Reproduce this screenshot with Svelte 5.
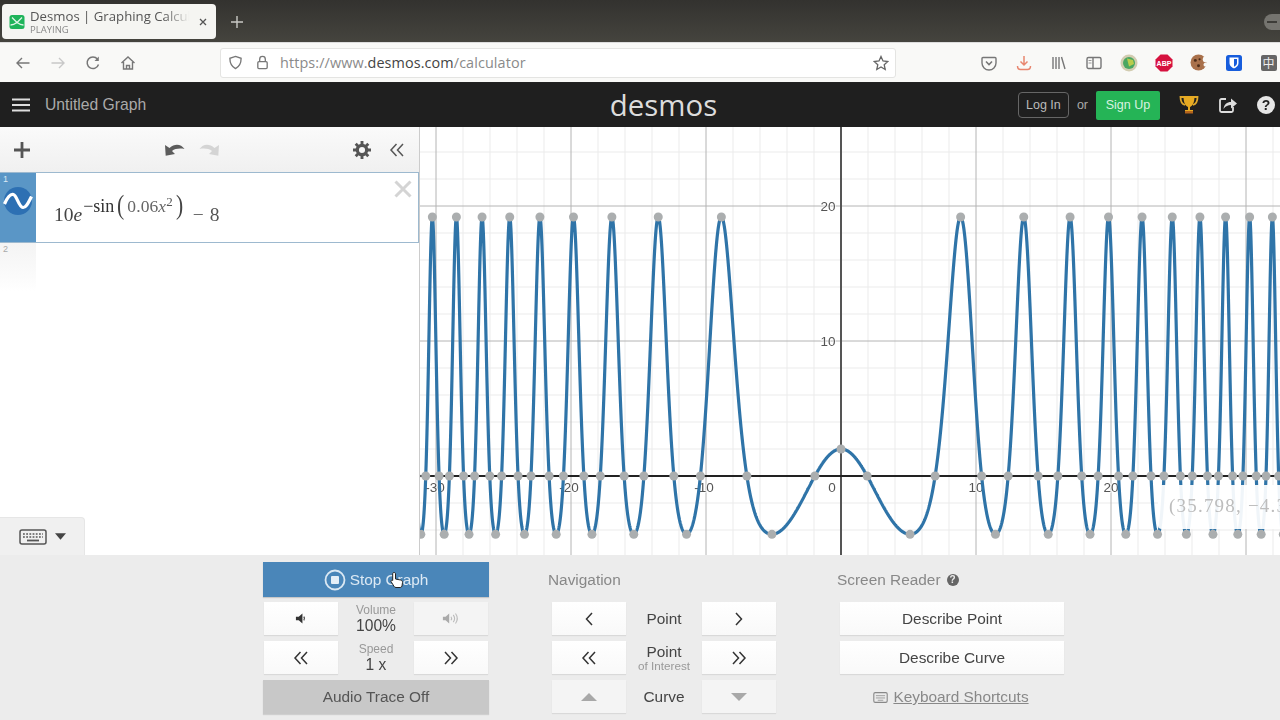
<script>
  const X0 = 421, Y0 = 349, S = 13.5;
  const px = (x) => X0 + x * S;
  const py = (y) => Y0 - y * S;
  const f = (x) => 10 * Math.exp(-Math.sin(0.06 * x * x)) - 8;

  const W = 860, H = 428;
  let d = '';
  for (let x = -32; x <= 33; x += 0.01) {
    d += (d ? 'L' : 'M') + px(x).toFixed(2) + ' ' + py(f(x)).toFixed(2);
  }

  const dots = [{ x: 0, y: 2 }];
  const addU = (u, y) => {
    const x = Math.sqrt(u / 0.06);
    for (const sx of [x, -x]) if (px(sx) > -8 && px(sx) < W + 8) dots.push({ x: sx, y });
  };
  const s0 = Math.asin(Math.log(10 / 8));
  for (let k = 0; k < 12; k++) {
    addU(Math.PI * 1.5 + 2 * Math.PI * k, 10 * Math.E - 8);
    addU(Math.PI * 0.5 + 2 * Math.PI * k, 10 / Math.E - 8);
    addU(s0 + 2 * Math.PI * k, 0);
    addU(Math.PI - s0 + 2 * Math.PI * k, 0);
  }

  const minorX = [], majorX = [], minorY = [], majorY = [];
  for (let i = -16; i <= 17; i++) {
    (i % 5 === 0 ? majorX : minorX).push(px(i * 2));
  }
  for (let i = -2; i <= 12; i++) {
    (i % 5 === 0 ? majorY : minorY).push(py(i * 2));
  }

  const xLabels = [
    { t: '-30', x: 15, y: 365 }, { t: '-20', x: 149, y: 365 }, { t: '-10', x: 284, y: 365 },
    { t: '0', x: 412, y: 365 }, { t: '10', x: 556, y: 365 }, { t: '20', x: 691, y: 365 }
  ];
  const yLabels = [{ t: '20', y: 84 }, { t: '10', y: 219 }];
</script>

<div class="app">
  <div class="titlebar">
    <div class="tab">
      <svg class="favicon" viewBox="0 0 16 16" width="16" height="16">
        <rect x="0.5" y="1" width="15" height="14" rx="2.5" fill="#1fb45a" />
        <path d="M3 3.500 8 8.500 13 3.500M1.500 11C4.500 11 6 10 8 8.500 10 10 11.500 11 14.500 11" fill="none" stroke="#dff5e6" stroke-width="1.300" />
      </svg>
      <div class="tabtext">
        <div class="tabtitle">Desmos | Graphing Calcul</div>
        <div class="playing">PLAYING</div>
      </div>
      <svg class="tabx" viewBox="0 0 10 10" width="10" height="10"><path d="M2 2 8 8M8 2 2 8" stroke="#555" stroke-width="1.300" /></svg>
    </div>
    <svg class="newtab" viewBox="0 0 12 12" width="12" height="12"><path d="M6 0V12M0 6H12" stroke="#c9c9c5" stroke-width="1.400" /></svg>
    <div class="winspacer"></div>
    <div class="winbtn"><span></span></div>
  </div>

  <div class="toolbar">
    <div class="slots">
      <div class="slot"><svg viewBox="0 0 16 16" width="16" height="16"><path d="M14.500 8H2M7 3 2 8l5 5" fill="none" stroke="#777" stroke-width="1.400" /></svg></div>
      <div class="slot"><svg viewBox="0 0 16 16" width="16" height="16"><path d="M1.500 8H14M9 3l5 5-5 5" fill="none" stroke="#c8c8c8" stroke-width="1.400" /></svg></div>
      <div class="slot"><svg viewBox="0 0 16 16" width="16" height="16"><path d="M13.500 9.500A5.800 5.800 0 1 1 12.400 4" fill="none" stroke="#777" stroke-width="1.500" /><path d="M13.800 1.500V6H9.500z" fill="#777" /></svg></div>
      <div class="slot"><svg viewBox="0 0 16 16" width="16" height="16"><path d="M1.500 8 8 2l6.500 6M3.500 7v7h9V7M6.500 14v-3.500h3V14" fill="none" stroke="#777" stroke-width="1.400" /></svg></div>
    </div>
    <div class="urlbar">
      <svg class="shield" viewBox="0 0 16 16" width="15" height="15"><path d="M8 1.500 14 3.500C14 9 12 12.500 8 14.500 4 12.500 2 9 2 3.500z" fill="none" stroke="#777" stroke-width="1.400" /></svg>
      <svg class="lock" viewBox="0 0 16 16" width="15" height="15"><path d="M5 7V4.500a3 3 0 0 1 6 0V7" fill="none" stroke="#777" stroke-width="1.400" /><rect x="3" y="7" width="10" height="7.500" rx="1.200" fill="none" stroke="#777" stroke-width="1.400" /></svg>
      <div class="url">https://www.<b>desmos.com</b>/calculator</div>
      <svg class="star" viewBox="0 0 16 16" width="16" height="16"><path d="M8 1.500 10 6l4.800.5-3.600 3.200 1 4.800L8 12l-4.200 2.500 1-4.800L1.200 6.500 6 6z" fill="none" stroke="#666" stroke-width="1.300" /></svg>
    </div>
    <div class="winspacer"></div>
    <div class="slots right">
      <div class="slot"><svg viewBox="0 0 16 16" width="16" height="16"><path d="M2 2.500h12a1 1 0 0 1 1 1V8a7 7 0 0 1-14 0V3.500a1 1 0 0 1 1-1z" fill="none" stroke="#777" stroke-width="1.400" /><path d="M5 6.500 8 9.500l3-3" fill="none" stroke="#777" stroke-width="1.600" /></svg></div>
      <div class="slot"><svg viewBox="0 0 16 16" width="16" height="16"><path d="M8 1v9M4.500 6.500 8 10l3.500-3.500M1.500 11c0 2 1 3.500 3 3.500h7c2 0 3-1.500 3-3.500" fill="none" stroke="#e8866f" stroke-width="1.500" /></svg></div>
      <div class="slot"><svg viewBox="0 0 16 16" width="16" height="16"><path d="M2 2v12M5 2v12M8 2v12M10.500 2l3.500 12" fill="none" stroke="#777" stroke-width="1.400" /></svg></div>
      <div class="slot"><svg viewBox="0 0 16 16" width="16" height="16"><rect x="1" y="2.500" width="14" height="11" rx="1.500" fill="none" stroke="#777" stroke-width="1.400" /><path d="M7 3v10" stroke="#777" stroke-width="1.400" /><path d="M2.500 5.500H5.500M2.500 8H5.500" stroke="#999" stroke-width="1" /></svg></div>
      <div class="slot"><svg viewBox="0 0 18 18" width="18" height="18"><circle cx="9" cy="9" r="8.500" fill="#d2ccb0" /><circle cx="9" cy="9" r="6" fill="#4aa660" /><path d="M7 4.500 13 6 14 10 9 12.500z" fill="#b9cc4c" /></svg></div>
      <div class="slot"><svg viewBox="0 0 18 18" width="18" height="18"><path d="M5.500 .5h7l5 5v7l-5 5h-7l-5-5v-7z" fill="#d6123f" /><text x="9" y="11.500" class="abp">ABP</text></svg></div>
      <div class="slot"><svg viewBox="0 0 16 16" width="17" height="17"><circle cx="8" cy="8" r="7.500" fill="#a9714b" /><circle cx="5" cy="6" r="1.400" fill="#4c2c18" /><circle cx="8" cy="11" r="1.400" fill="#4c2c18" /><circle cx="9" cy="5" r="1" fill="#4c2c18" /><circle cx="15" cy="5" r="3" fill="#f9f9f7" /><circle cx="14.500" cy="10" r="1.800" fill="#f9f9f7" /></svg></div>
      <div class="slot"><svg viewBox="0 0 16 16" width="16" height="16"><rect width="16" height="16" rx="2.500" fill="#175ddc" /><path d="M3.500 2.500h9V8c0 3-2.500 4.500-4.500 5.500C6 12.500 3.500 11 3.500 8z" fill="#fff" /><path d="M8 4h3v4c0 1.800-1.500 2.800-3 3.800z" fill="#175ddc" /></svg></div>
      <div class="slot"><div class="zh">中</div></div>
    </div>
  </div>

  <header class="dbar">
    <div class="dleft">
      <svg viewBox="0 0 18 14" width="18" height="14"><path d="M0 1.500H18M0 7H18M0 12.500H18" stroke="#ddd" stroke-width="2" /></svg>
      <span class="gtitle">Untitled Graph</span>
    </div>
    <div class="logo">desmos</div>
    <div class="dright">
      <button class="login">Log In</button>
      <span class="or">or</span>
      <button class="signup">Sign Up</button>
      <svg class="trophy" viewBox="0 0 20 20" width="20" height="20">
        <path d="M5 2H1.500C1.500 7 3 9 6 10M15 2h3.500C18.500 7 17 9 14 10" fill="none" stroke="#e0a82a" stroke-width="1.800" />
        <path d="M4.500 1h11C15.500 8 13.500 11 11 12v3h3v3H6v-3h3v-3C6.500 11 4.500 8 4.500 1z" fill="#e7aa22" />
        <rect x="6" y="16" width="8" height="2.500" fill="#b5651d" />
      </svg>
      <svg class="share" viewBox="0 0 20 20" width="20" height="20">
        <path d="M8 4H3.500A1.500 1.500 0 0 0 2 5.500v10A1.500 1.500 0 0 0 3.500 17h10a1.500 1.500 0 0 0 1.500-1.500V12" fill="none" stroke="#ddd" stroke-width="1.800" />
        <path d="M5.500 14C6 9.500 9 7 13 7V3.500l6 5-6 5V10c-3 0-5.500 1-7.500 4z" fill="#ddd" />
      </svg>
      <div class="help">?</div>
    </div>
  </header>

  <div class="work">
    <aside class="panel">
      <div class="ptools">
        <svg class="plus" viewBox="0 0 16 16" width="16" height="16"><path d="M8 0V16M0 8H16" stroke="#555" stroke-width="2.800" /></svg>
        <svg class="undo" viewBox="0 0 22 15" width="22" height="15"><path d="M2 3 2.700 13.700 12 12 9 9C12 6.500 17 6 21.500 7 18 2 12 1 6.500 6z" fill="#5c5c5c" /></svg>
        <svg class="redo" viewBox="0 0 22 15" width="22" height="15"><path d="M20 3 19.300 13.700 10 12 13 9C10 6.500 5 6 .5 7 4 2 10 1 15.500 6z" fill="#d4d4d4" /></svg>
        <svg class="gear" viewBox="0 0 20 20" width="18" height="18"><circle cx="10" cy="10" r="5.200" fill="none" stroke="#555" stroke-width="3.600" /><path d="M10 0v4M10 16v4M0 10h4M16 10h4M3 3l3 3M14 14l3 3M17 3l-3 3M6 14l-3 3" stroke="#555" stroke-width="3.200" /></svg>
        <svg class="collapse" viewBox="0 0 16 14" width="16" height="14"><path d="M7.500 1 2 7l5.500 6M14 1 8.500 7l5.500 6" fill="none" stroke="#555" stroke-width="1.500" /></svg>
      </div>
      <div class="expr">
        <div class="ecol">
          <span class="num">1</span>
          <svg viewBox="0 0 30 30" width="30" height="30">
            <circle cx="15" cy="15" r="14" fill="#2d70b3" />
            <path d="M1.500 18C4.500 11 7.500 7.500 10.500 8.500 14 9.500 15.500 21 20 21.500 23.500 21.800 26 15 28.500 10.500" fill="none" stroke="#fff" stroke-width="3.200" />
          </svg>
        </div>
        <div class="ebody">
          <div class="math">
            <span class="base">10<i>e</i></span><span class="sup"><span class="fn">−sin</span><span class="paren">(</span><span class="arg">0.06<i>x</i></span><span class="sq">2</span><span class="paren">)</span></span><span class="minus">−</span><span class="eight">8</span>
          </div>
          <svg class="ex" viewBox="0 0 18 18" width="18" height="18"><path d="M1.500 1.500 16.500 16.500M16.500 1.500 1.500 16.500" stroke="#d4d4d4" stroke-width="3" /></svg>
        </div>
      </div>
      <div class="empty">
        <div class="ecol2"><span class="num2">2</span></div>
      </div>
      <div class="kbtab">
        <svg viewBox="0 0 28 16" width="28" height="16"><rect x="1" y="1" width="26" height="14" rx="2" fill="none" stroke="#555" stroke-width="1.500" /><path d="M4 5h20M4 8h20" stroke="#555" stroke-width="1.600" stroke-dasharray="1.800 1.400" /><path d="M8 11.500h12" stroke="#555" stroke-width="1.800" /></svg>
        <svg viewBox="0 0 12 7" width="11" height="7"><path d="M0 0H12L6 7z" fill="#444" /></svg>
      </div>
    </aside>

    <div class="graph">
      <svg viewBox="0 0 {W} {H}" width={W} height={H}>
        {#each minorX as x}<line x1={x} x2={x} y1="0" y2={H} class="minor" />{/each}
        {#each minorY as y}<line y1={y} y2={y} x1="0" x2={W} class="minor" />{/each}
        {#each majorX as x}<line x1={x} x2={x} y1="0" y2={H} class="major" />{/each}
        {#each majorY as y}<line y1={y} y2={y} x1="0" x2={W} class="major" />{/each}
        <line x1={X0} x2={X0} y1="0" y2={H} class="yaxis" />
        <line y1={Y0} y2={Y0} x1="0" x2={W} class="xaxis" />
        {#each xLabels as l}<text x={l.x} y={l.y} class="tick">{l.t}</text>{/each}
        {#each yLabels as l}<text x="408" y={l.y} class="tick">{l.t}</text>{/each}
        <path {d} class="curve" />
        {#each dots as p}<circle cx={px(p.x)} cy={py(p.y)} r="4.500" class="dot" />{/each}
      </svg>
      <div class="tip">(35.798, −4.3</div>
    </div>
  </div>

  <section class="audio">
    <div class="col">
      <button class="stop">
        <svg viewBox="0 0 22 22" width="22" height="22"><circle cx="11" cy="11" r="9.500" fill="none" stroke="#dbe8f3" stroke-width="1.800" /><rect x="7" y="7" width="8" height="8" rx="1" fill="#e6eff7" /></svg>
        Stop Graph
      </button>
      <div class="row">
        <button class="sq-btn"><svg viewBox="0 0 14 14" width="13" height="13"><path d="M1 5H4L8 1.500V12.500L4 9H1z" fill="#333" /><path d="M9.500 5Q11 7 9.500 9" fill="none" stroke="#333" stroke-width="1.300" /></svg></button>
        <div class="mid"><small>Volume</small><span>100%</span></div>
        <button class="sq-btn off"><svg viewBox="0 0 20 14" width="18" height="13"><path d="M1 5H4L8 1.500V12.500L4 9H1z" fill="#aaa" /><path d="M10 5Q11.500 7 10 9M12.500 3Q15.500 7 12.500 11M15 1.500Q19 7 15 12.500" fill="none" stroke="#bbb" stroke-width="1.200" /></svg></button>
      </div>
      <div class="row">
        <button class="sq-btn"><svg viewBox="0 0 16 14" width="16" height="14"><path d="M7.500 1 2 7l5.500 6M14 1 8.500 7l5.500 6" fill="none" stroke="#333" stroke-width="1.500" /></svg></button>
        <div class="mid"><small>Speed</small><span>1 x</span></div>
        <button class="sq-btn"><svg viewBox="0 0 16 14" width="16" height="14"><path d="M2 1l5.500 6L2 13M8.500 1 14 7l-5.500 6" fill="none" stroke="#333" stroke-width="1.500" /></svg></button>
      </div>
      <button class="trace">Audio Trace Off</button>
    </div>

    <div class="col">
      <div class="label nav">Navigation</div>
      <div class="row">
        <button class="sq-btn"><svg viewBox="0 0 10 14" width="10" height="14"><path d="M8 1 2.500 7 8 13" fill="none" stroke="#333" stroke-width="1.500" /></svg></button>
        <div class="mid big">Point</div>
        <button class="sq-btn"><svg viewBox="0 0 10 14" width="10" height="14"><path d="M2 1l5.500 6L2 13" fill="none" stroke="#333" stroke-width="1.500" /></svg></button>
      </div>
      <div class="row">
        <button class="sq-btn"><svg viewBox="0 0 16 14" width="16" height="14"><path d="M7.500 1 2 7l5.500 6M14 1 8.500 7l5.500 6" fill="none" stroke="#333" stroke-width="1.500" /></svg></button>
        <div class="mid big poi">Point<small>of Interest</small></div>
        <button class="sq-btn"><svg viewBox="0 0 16 14" width="16" height="14"><path d="M2 1l5.500 6L2 13M8.500 1 14 7l-5.500 6" fill="none" stroke="#333" stroke-width="1.500" /></svg></button>
      </div>
      <div class="row">
        <button class="sq-btn off"><svg viewBox="0 0 16 8" width="16" height="8"><path d="M0 8H16L8 0z" fill="#a8a8a8" /></svg></button>
        <div class="mid big">Curve</div>
        <button class="sq-btn off"><svg viewBox="0 0 16 8" width="16" height="8"><path d="M0 0H16L8 8z" fill="#a8a8a8" /></svg></button>
      </div>
    </div>

    <div class="col">
      <div class="label sr">Screen Reader <span class="q">?</span></div>
      <button class="wide">Describe Point</button>
      <button class="wide">Describe Curve</button>
      <div class="shortcuts">
        <svg viewBox="0 0 16 12" width="15" height="11"><rect x="0.700" y="0.700" width="14.600" height="10.600" rx="1.500" fill="none" stroke="#888" stroke-width="1.200" /><path d="M3 4h10M3 6.500h10M5 9h6" stroke="#999" stroke-width="1" /></svg>
        <span>Keyboard Shortcuts</span>
      </div>
    </div>

    <svg class="cursor" viewBox="0 0 14 18" width="14" height="18">
      <path d="M4 1.500c1 0 1.500.6 1.500 1.500v5l5 1c1.500.4 2 1 2 2.500l-.5 3.500c-.2 1-.8 1.500-1.800 1.500H6c-1 0-1.500-.4-2-1.200L1 10.500C.6 9.500 2 8.800 2.700 9.500V3c0-1 .4-1.500 1.300-1.500z" fill="#fff" stroke="#222" stroke-width="1" />
    </svg>
  </section>
</div>

<style>
  :global(body) { margin: 0; background: #ececec; }
  .app {
    width: 1280px; height: 720px; overflow: hidden;
    display: flex; flex-direction: column;
    font-family: "Liberation Sans", Arial, sans-serif;
    filter: blur(0.4px);
  }
  .titlebar {
    height: 42px; box-sizing: border-box; padding: 4px 0 3px 2px;
    background: linear-gradient(#33322f, #45443e);
    display: flex; align-items: center;
  }
  .tab {
    width: 214px; height: 35px; box-sizing: border-box; padding-left: 7px;
    background: #f5f5f2; border-radius: 4px;
    display: flex; align-items: center; gap: 5px;
  }
  .favicon { flex: none; }
  .tabtext {
    width: 163px; white-space: nowrap;
    font-family: "Open Sans", sans-serif;
    -webkit-mask-image: linear-gradient(90deg, #000 82%, transparent 98%);
    mask-image: linear-gradient(90deg, #000 82%, transparent 98%);
  }
  .tabtitle { font-size: 13.200px; line-height: 16px; color: #555; }
  .playing { font-size: 9.500px; line-height: 12px; color: #888; }
  .tabx { margin-left: 0; flex: none; }
  .newtab { margin-left: 15px; }
  .winspacer { flex: 1; }
  .winbtn {
    width: 16px; height: 16px; border-radius: 50% 0 0 50%; background: #75746f;
    display: flex; align-items: center; padding-left: 3px; box-sizing: border-box;
  }
  .winbtn span { width: 10px; height: 2px; background: #3d3c38; }
  .toolbar {
    height: 41px; box-sizing: border-box; border-top: 1px solid #ddd; border-bottom: 1px solid #222;
    background: #f9f9f7; display: flex; align-items: center; padding-left: 5px;
  }
  .slots { display: flex; }
  .slot { width: 35px; height: 24px; display: flex; align-items: center; justify-content: center; }
  .slots.right { margin-right: -6px; }
  .urlbar {
    margin-left: 75px; width: 676px; height: 30px; box-sizing: border-box;
    background: #fff; border: 1px solid #e4e4e2; border-radius: 3px;
    display: flex; align-items: center; padding-left: 7px;
  }
  .shield { flex: none; }
  .lock { flex: none; margin-left: 12px; }
  .url {
    margin-left: 10px; font-family: "Open Sans", sans-serif; font-size: 14.400px; color: #8a8a8a; letter-spacing: .1px;
  }
  .url b { font-weight: 400; color: #444; }
  .star { margin-left: auto; margin-right: 6px; }
  .abp { font: 700 7px "Liberation Sans", sans-serif; fill: #fff; text-anchor: middle; }
  .zh {
    width: 16px; height: 16px; border-radius: 2px; background: #666; color: #eee;
    font: 12px/16px "Noto Sans CJK SC", sans-serif; text-align: center;
  }
  .dbar {
    height: 44px; flex: none; background: #1f1f1f; color: #ddd;
    display: grid; grid-template-columns: 1fr auto 1fr; align-items: center;
    padding: 0 5px 0 12px; box-sizing: border-box;
  }
  .dleft { display: flex; align-items: center; gap: 15px; }
  .gtitle { font-size: 15.700px; color: #aaa; }
  .logo {
    font-family: "Open Sans", sans-serif; font-weight: 400; font-size: 29.400px; line-height: 42px;
    color: #dcdcdc; margin-left: 40px;
  }
  .dright { display: flex; align-items: center; justify-content: flex-end; font-size: 13px; }
  button { font-family: inherit; padding: 0; margin: 0; border: 0; }
  .login {
    width: 51px; height: 26px; box-sizing: border-box; background: transparent; color: #bbb;
    border: 1px solid #666; border-radius: 4px; font-size: 12.500px;
  }
  .or { margin: 0 8px 0 8px; color: #aaa; font-size: 12.500px; }
  .signup {
    width: 64px; height: 29px; background: #25b456; color: #d8f3e0; border-radius: 2px; font-size: 12.500px;
  }
  .trophy { margin-left: 19px; }
  .share { margin-left: 19px; }
  .help {
    margin-left: 19px; width: 18px; height: 18px; border-radius: 50%; background: #e6e6e6; color: #1f1f1f;
    font: 700 14px/18px "Liberation Sans", sans-serif; text-align: center;
  }
  .work { height: 428px; flex: none; display: flex; }
  .panel {
    width: 420px; flex: none; box-sizing: border-box; background: #fff;
    display: flex; flex-direction: column; position: relative;
    border-right: 1px solid #ccc;
  }
  .ptools {
    height: 45px; flex: none; background: linear-gradient(#fafafa, #f0f0f0);
    display: flex; align-items: center; padding-left: 14px;
  }
  .undo { margin-left: 133px; }
  .redo { margin-left: 14px; }
  .gear { margin-left: 132px; }
  .collapse { margin-left: 18px; }
  .expr {
    height: 71px; flex: none; box-sizing: border-box; border: 1px solid #9db9cf; border-left: 0;
    display: flex;
  }
  .ecol {
    width: 36px; flex: none; background: #5a96c6; position: relative;
    display: flex; justify-content: center; padding-top: 13px; box-sizing: border-box;
  }
  .num { position: absolute; left: 3px; top: 1px; font-size: 9px; color: #d9e8f4; }
  .ebody { flex: 1; position: relative; display: flex; align-items: flex-end; padding: 0 0 17px 18px; }
  .math {
    font-family: "Liberation Serif", serif; font-size: 19.500px; color: #444; line-height: 20px;
    white-space: nowrap; display: flex; align-items: baseline;
  }
  .sup {
    display: inline-block; margin-left: 1px; font-size: 18px;
    align-self: baseline; transform: translateY(-9px);
  }
  .fn { color: #333; }
  .arg { color: #666; font-size: 17.500px; letter-spacing: .1px; }
  .paren { font-size: 27px; line-height: 10px; vertical-align: -1.500px; margin: 0 2px; color: #444; transform: scaleX(.8); display: inline-block; }
  .sq { font-size: 13px; vertical-align: 6px; color: #555; }
  .minus { margin: 0 6px 0 7px; color: #666; }
  .eight { color: #555; }
  .ex { position: absolute; right: 6px; top: 7px; }
  .empty { height: 48px; flex: none; }
  .ecol2 {
    width: 36px; height: 100%; background: linear-gradient(#f4f4f4, #fbfbfb 70%, #fff);
    box-sizing: border-box; padding: 1px 0 0 3px;
  }
  .num2 { font-size: 9px; color: #aaa; display: block; }
  .kbtab {
    position: absolute; left: 0; bottom: 0; width: 85px; height: 38px; box-sizing: border-box;
    background: #f0f0f0; border-top: 1px solid #e6e6e6; border-right: 1px solid #e6e6e6; border-top-right-radius: 4px;
    display: flex; align-items: center; padding-left: 19px; gap: 8px;
  }
  .graph { flex: 1; position: relative; background: #fff; overflow: hidden; }
  .graph svg { display: block; }
  .minor { stroke: #ebebeb; stroke-width: 1; }
  .major { stroke: #b4b4b4; stroke-width: 1; }
  .yaxis { stroke: #555; stroke-width: 2; }
  .xaxis { stroke: #222; stroke-width: 1.800; }
  .curve { fill: none; stroke: #2f74a8; stroke-width: 3.200; stroke-linejoin: round; }
  .dot { fill: #abaeaf; }
  .tick {
    font: 13.500px "Liberation Sans", sans-serif; fill: #555; text-anchor: middle;
    paint-order: stroke; stroke: #fff; stroke-width: 2px; stroke-opacity: .6;
  }
  .tip {
    position: absolute; left: 738px; top: 358px; width: 130px; height: 44px; box-sizing: border-box;
    padding: 10px 0 0 11px; overflow: hidden; white-space: nowrap;
    background: rgba(255, 255, 255, .93); border-radius: 4px;
    font: 19px/22px "Liberation Serif", serif; color: #bdbdbd; letter-spacing: 1.200px;
  }
  .audio {
    flex: 1; background: #ececec; position: relative; box-sizing: border-box;
    display: grid; grid-template-columns: 226px 226px 226px; column-gap: 62px;
    padding: 7px 0 0 263px;
  }
  .col { display: flex; flex-direction: column; gap: 6px; }
  .stop {
    height: 35px; margin-bottom: -1px; background: #4a86b9; color: #dce9f4; font-size: 15.400px;
    display: flex; align-items: center; justify-content: center; gap: 4px;
    box-shadow: 0 1px 1px rgba(0, 0, 0, .15);
  }
  .row { display: grid; grid-template-columns: 74px 1fr 74px; height: 33px; padding: 0 1px; }
  .sq-btn {
    background: linear-gradient(#fff, #f9f9f9); box-shadow: 0 1px 1px rgba(0, 0, 0, .08);
    display: flex; align-items: center; justify-content: center;
  }
  .sq-btn.off { background: #f4f4f4; }
  .mid {
    display: flex; flex-direction: column; align-items: center; justify-content: center;
    font-size: 15.600px; color: #444; line-height: 17px;
  }
  .mid small { font-size: 12px; line-height: 13px; color: #999; }
  .mid.big { color: #444; font-size: 15.400px; }
  .poi small { font-size: 11.700px; line-height: 12px; }
  .trace {
    height: 34px; background: #c8c8c8; color: #555; font-size: 15.400px;
    box-shadow: 0 1px 1px rgba(0, 0, 0, .12);
  }
  .label {
    height: 35px; margin-bottom: -1px; line-height: 35px; font-size: 15.400px; color: #888; box-sizing: border-box;
  }
  .nav { margin-left: -3px; }
  .sr { margin-left: -2px; display: flex; align-items: center; gap: 5px; }
  .q {
    width: 12px; height: 12px; border-radius: 50%; background: #666; color: #ececec;
    font: 700 10px/12px "Liberation Sans", sans-serif; text-align: center; margin-left: 1px;
  }
  .wide {
    height: 33px; margin: 0 1px; background: linear-gradient(#fff, #f9f9f9); color: #444; font-size: 15.400px;
    box-shadow: 0 1px 1px rgba(0, 0, 0, .08);
  }
  .shortcuts {
    display: flex; align-items: center; justify-content: center; gap: 5px; height: 34px;
    font-size: 15.400px; color: #888; margin-left: -2px;
  }
  .shortcuts span { text-decoration: underline; }
  .cursor { position: absolute; left: 390px; top: 16px; }
</style>
